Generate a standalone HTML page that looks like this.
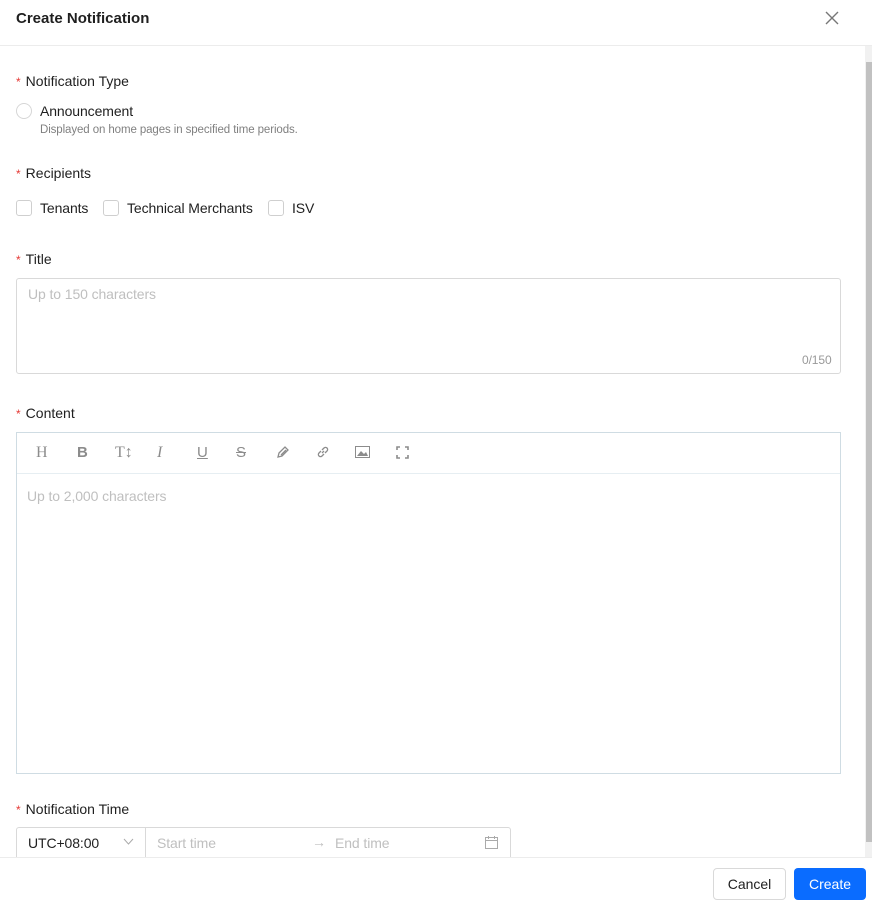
<!DOCTYPE html><html><head><style>
*{box-sizing:border-box;margin:0;padding:0}
body{width:872px;height:905px;overflow:hidden;background:#fff;font-family:"Liberation Sans",sans-serif;color:#1f1f1f;position:relative;font-size:14px}
.hdr{position:absolute;left:0;top:0;width:872px;height:46px;border-bottom:1px solid #ececec}
.hdr h1{position:absolute;left:16px;top:10px;font-size:15px;font-weight:bold;color:#1f1f1f}
.x{position:absolute;left:824px;top:10px}
.sb{position:absolute;left:865px;top:46px;width:7px;height:811px;background:#f1f1f1}
.th{position:absolute;left:866px;top:62px;width:6px;height:780px;background:#c1c1c1}
.lbl{position:absolute;left:16px;font-size:14px}
.lbl b{color:#e53935;font-weight:normal;margin-right:5px;font-size:12px}
.t{position:absolute;font-size:14px;letter-spacing:-0.1px}
.box{position:absolute;border:1px solid #d9d9d9;border-radius:3px;background:#fff}
.cb{position:absolute;width:16px;height:16px;border:1px solid #cfcfcf;border-radius:3px}
.ph{color:#bfbfbf}
.ic{position:absolute;top:444px;color:#8c8c8c;font-size:15px}
.ft{position:absolute;left:0;top:857px;width:872px;height:48px;border-top:1px solid #ececec;background:#fff}
.btn{position:absolute;top:868px;height:32px;border-radius:4px;font-size:14px;text-align:center;line-height:30px}
</style></head><body>
<div class="hdr"><h1>Create Notification</h1>
<svg class="x" width="16" height="16" viewBox="0 0 16 16"><path d="M2 2L14 14M14 2L2 14" stroke="#777" stroke-width="1.4"/></svg></div>
<div class="sb"></div><div class="th"></div>
<div class="lbl" style="top:73px"><b>*</b>Notification Type</div>
<div style="position:absolute;left:16px;top:103px;width:16px;height:16px;border:1px solid #d6d6d6;border-radius:50%"></div>
<div class="t" style="left:40px;top:103px">Announcement</div>
<div class="t" style="left:40px;top:124px;font-size:11.5px;color:#808080">Displayed on home pages in specified time periods.</div>
<div class="lbl" style="top:165px"><b>*</b>Recipients</div>
<div class="cb" style="left:16px;top:200px"></div><div class="t" style="left:40px;top:200px">Tenants</div>
<div class="cb" style="left:103px;top:200px"></div><div class="t" style="left:127px;top:200px">Technical Merchants</div>
<div class="cb" style="left:268px;top:200px"></div><div class="t" style="left:292px;top:200px">ISV</div>
<div class="lbl" style="top:251px"><b>*</b>Title</div>
<div class="box" style="left:16px;top:278px;width:825px;height:96px"></div>
<div class="t ph" style="left:28px;top:286px">Up to 150 characters</div>
<div class="t" style="left:802px;top:353px;font-size:12px;color:#999">0/150</div>
<div class="lbl" style="top:405px"><b>*</b>Content</div>
<div class="box" style="left:16px;top:432px;width:825px;height:342px;border-color:#cfdce3;border-radius:0"></div>
<div style="position:absolute;left:17px;top:473px;width:823px;border-top:1px solid #e6eef2"></div>
<div class="ic" style="left:36px;font-family:'Liberation Serif',serif;font-size:16px">H</div>
<div class="ic" style="left:77px;font-weight:bold">B</div>
<div class="ic" style="left:115px;font-family:'Liberation Serif',serif;font-size:16px">T↕</div>
<div class="ic" style="left:157px;font-family:'Liberation Serif',serif;font-style:italic;font-size:16px">I</div>
<div class="ic" style="left:197px;text-decoration:underline">U</div>
<div class="ic" style="left:236px;text-decoration:line-through">S</div>
<svg style="position:absolute;left:276px;top:445px" width="14" height="14" viewBox="0 0 14 14"><path d="M2 12L3 8L9 2L12 5L6 11ZM5 10L10 5" stroke="#8c8c8c" stroke-width="1.3" fill="none"/></svg>
<svg style="position:absolute;left:316px;top:445px" width="14" height="14" viewBox="0 0 14 14"><path d="M6 8L8 6M5 6L3 8A2 2 0 0 0 6 11L8 9M9 8L11 6A2 2 0 0 0 8 3L6 5" stroke="#8c8c8c" stroke-width="1.3" fill="none"/></svg>
<svg style="position:absolute;left:355px;top:446px" width="15" height="12" viewBox="0 0 15 12"><rect x="0.5" y="0.5" width="14" height="11" fill="none" stroke="#8c8c8c"/><path d="M2 10L6 5L9 8L11 6L13 10Z" fill="#8c8c8c"/></svg>
<svg style="position:absolute;left:396px;top:446px" width="13" height="13" viewBox="0 0 13 13"><path d="M1 4V1H4M9 1H12V4M12 9V12H9M4 12H1V9" stroke="#8c8c8c" stroke-width="1.6" fill="none"/></svg>
<div class="t ph" style="left:27px;top:488px">Up to 2,000 characters</div>
<div class="lbl" style="top:801px"><b>*</b>Notification Time</div>
<div class="box" style="left:16px;top:827px;width:495px;height:40px"></div>
<div style="position:absolute;left:145px;top:828px;height:30px;border-left:1px solid #d9d9d9"></div>
<div class="t" style="left:28px;top:835px">UTC+08:00</div>
<svg style="position:absolute;left:123px;top:838px" width="11" height="8" viewBox="0 0 11 8"><path d="M1 1L5.5 6L10 1" stroke="#aaa" fill="none"/></svg>
<div class="t ph" style="left:157px;top:835px">Start time</div>
<div class="t ph" style="left:312px;top:834px">→</div>
<div class="t ph" style="left:335px;top:835px">End time</div>
<svg style="position:absolute;left:485px;top:836px" width="13" height="13" viewBox="0 0 13 13"><rect x="0.5" y="1.5" width="12" height="11" fill="none" stroke="#aaa"/><path d="M0.5 4.5H12.5M3.5 0V3M9.5 0V3" stroke="#aaa"/></svg>
<div class="ft"></div>
<div class="btn" style="left:713px;width:73px;border:1px solid #d9d9d9;color:#1f1f1f">Cancel</div>
<div class="btn" style="left:794px;width:72px;background:#0a6cff;color:#fff;line-height:32px">Create</div>
</body></html>
